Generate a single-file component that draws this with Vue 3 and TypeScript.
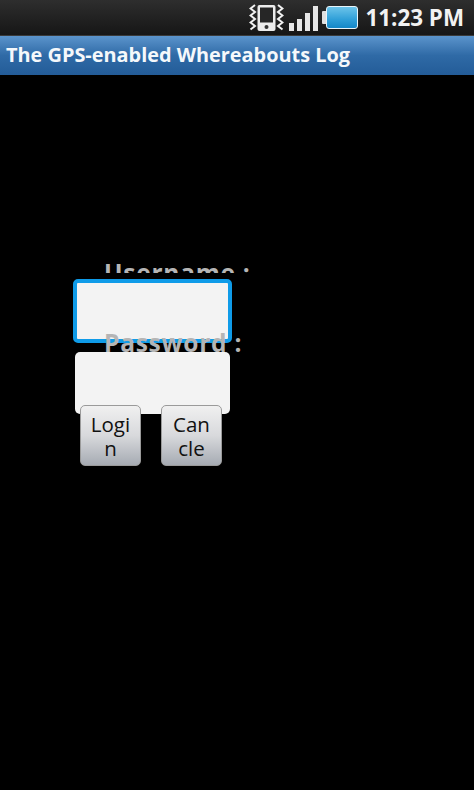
<script setup lang="ts">
const bars: number[] = [8, 12, 18, 25]
</script>

<template>
  <div class="screen">
    <header class="status">
      <svg class="vibrate" width="35" height="28" viewBox="0 0 35 28">
        <path d="M6 1 L1.5 4.5 L6 8 L1.5 11.5 L6 15 L1.5 18.5 L6 22 L1.5 25.5" fill="none" stroke="#f2f2f2" stroke-width="2" />
        <path d="M29 1 L33.5 4.5 L29 8 L33.5 11.5 L29 15 L33.5 18.5 L29 22 L33.5 25.5" fill="none" stroke="#f2f2f2" stroke-width="2" />
        <rect x="8.5" y="1" width="18" height="26" rx="2" fill="#ececec" />
        <rect x="11" y="3.5" width="13" height="15" fill="#262626" />
        <circle cx="17.5" cy="23" r="2" fill="#333" />
      </svg>
      <div class="signal">
        <span v-for="h in bars" :key="h" class="bar" :style="{ height: h + 'px' }"></span>
      </div>
      <div class="battery"><span class="nub"></span><span class="cell"></span></div>
      <span class="time">11:23 PM</span>
    </header>
    <div class="titlebar">The GPS-enabled Whereabouts Log</div>
    <main class="content">
      <form class="form" @submit.prevent>
        <label class="label user"><span>Username :</span></label>
        <div class="input focused"></div>
        <label class="label pass"><span>Password :</span></label>
        <div class="input plain"></div>
        <div class="buttons">
          <button type="button" class="btn">Logi<br />n</button>
          <button type="button" class="btn">Can<br />cle</button>
        </div>
      </form>
    </main>
  </div>
</template>

<style scoped>
.screen {
  width: 474px;
  height: 790px;
  background: #000;
  overflow: hidden;
  font-family: "Open Sans", "DejaVu Sans", sans-serif;
  display: flex;
  flex-direction: column;
}
.status {
  height: 36px;
  flex: none;
  box-sizing: border-box;
  background: linear-gradient(#2e2e2e, #161616);
  border-bottom: 1px solid #3a3a3a;
  display: flex;
  align-items: center;
  padding: 0 10px 0 249px;
}
.vibrate { flex: none; }
.signal {
  display: flex;
  align-items: flex-end;
  gap: 3px;
  height: 25px;
  margin: 1px 0 0 5px;
  width: 30px;
  flex: none;
}
.bar { width: 5px; background: #e6e6e6; display: block; }
.battery { display: flex; align-items: center; margin-left: 3px; flex: none; }
.nub { width: 4px; height: 13px; background: #e0e0e0; border-radius: 1px 0 0 1px; }
.cell {
  width: 32px;
  height: 23px;
  box-sizing: border-box;
  border: 1px solid #e8f4fa;
  border-radius: 3px;
  background: linear-gradient(#6cc4ea, #2f9fd8 60%, #1487c8);
}
.time {
  margin-left: auto;
  font-weight: 700;
  font-size: 22.4px;
  color: #f2f2f2;
  white-space: nowrap;
}
.titlebar {
  height: 39px;
  flex: none;
  box-sizing: border-box;
  padding-left: 6px;
  background: linear-gradient(#5b94cc, #2f6aa6 50%, #235c98);
  color: #f5f8fb;
  font-weight: 700;
  font-size: 19.9px;
  line-height: 38px;
  white-space: nowrap;
}
.content { flex: 1; padding: 187px 0 0 73px; }
.form { width: 159px; position: relative; }
.label {
  display: block;
  overflow: hidden;
  width: 190px;
  color: #b5b5b5;
  font-weight: 700;
  font-size: 24.5px;
  letter-spacing: 0.75px;
  padding-left: 31px;
  white-space: nowrap;
}
.user { height: 11px; line-height: 21px; margin-bottom: 6px; }
.pass { height: 19px; line-height: 20px; margin-top: -10px; position: relative; }
.input { box-sizing: border-box; background: #f3f3f3; border-radius: 5px; }
.focused {
  height: 64px;
  border: 4px solid #0f9be8;
}
.plain { height: 62px; margin: 0 2px; }
.buttons {
  display: flex;
  gap: 20px;
  margin: -9px 0 0 7px;
  position: relative;
}
.btn {
  width: 61px;
  height: 61px;
  padding: 0;
  border: 1px solid #9a9a9a;
  border-radius: 5px;
  background: linear-gradient(#f0f0f0, #d8d9dc 50%, #a6abb3);
  color: #111;
  font-family: "Open Sans", "DejaVu Sans", sans-serif;
  font-size: 20.5px;
  line-height: 24px;
}
</style>
